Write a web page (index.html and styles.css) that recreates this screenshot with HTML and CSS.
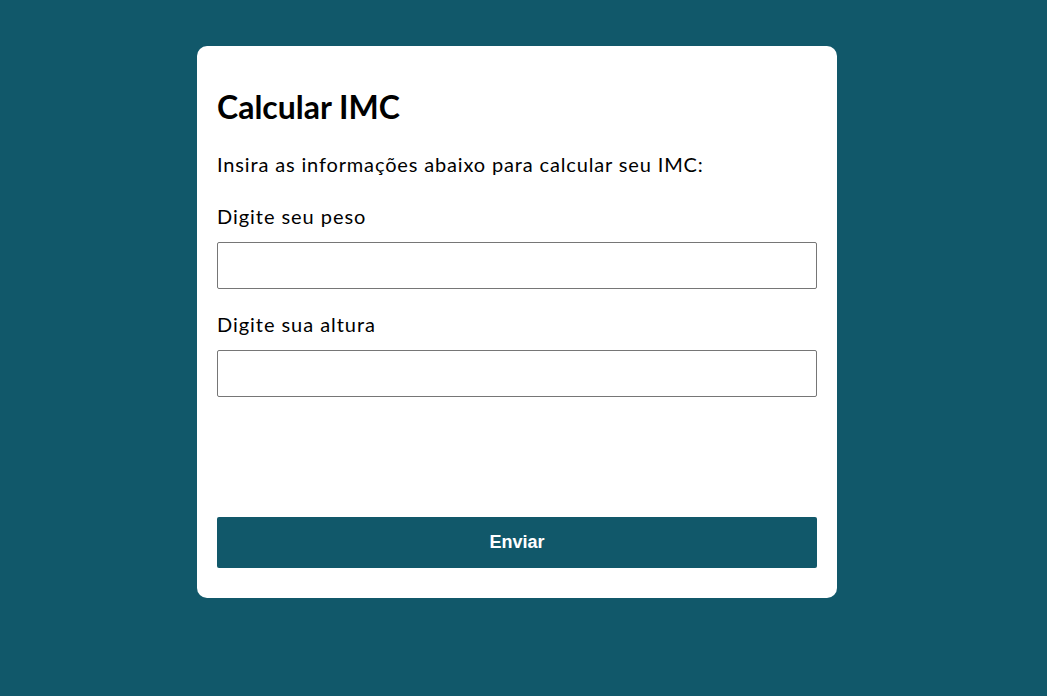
FILE: index.html
```html
<!DOCTYPE html>
<html lang="pt-BR">
<head>
<meta charset="utf-8">
<title>Calcular IMC</title>
<link rel="stylesheet" href="styles.css">
</head>
<body>
<main class="card">
  <h1 class="title">Calcular IMC</h1>
  <p class="subtitle">Insira as informações abaixo para calcular seu IMC:</p>
  <label class="label label-first" for="peso">Digite seu peso</label>
  <input class="field" id="peso" type="text">
  <label class="label" for="altura">Digite sua altura</label>
  <input class="field" id="altura" type="text">
  <div class="result"></div>
  <button class="btn" type="button">Enviar</button>
</main>
</body>
</html>
```
FILE: styles.css
```css
html, body {
  margin: 0;
  padding: 0;
  background: #11586a;
  height: 100%;
}
body {
  font-family: Lato, "Open Sans", sans-serif;
  color: #000;
}
.card {
  box-sizing: border-box;
  width: 640px;
  margin: 46px 0 0 197px;
  padding: 41px 20px 30px 20px;
  background: #fff;
  border-radius: 10px;
  display: flex;
  flex-direction: column;
}
.title {
  margin: 0;
  font-size: 32px;
  line-height: 40px;
  font-weight: 700;
}
.subtitle {
  margin: 25px 0 0 0;
  font-size: 20px;
  line-height: 24px;
  letter-spacing: 0.85px;
}
.label {
  display: block;
  margin-top: 23px;
  font-size: 20px;
  line-height: 24px;
  letter-spacing: 0.95px;
}
.label-first {
  margin-top: 28px;
}
.field {
  box-sizing: border-box;
  width: 100%;
  height: 47px;
  margin: 14px 0 0 0;
  border: 1px solid #767676;
  border-radius: 2px;
  background: #fff;
  padding: 0 8px;
  font-size: 16px;
}
.result {
  height: 120px;
}
.btn {
  height: 51px;
  width: 100%;
  border: none;
  border-radius: 2px;
  background: #11586a;
  color: #fff;
  font-family: "Liberation Sans", Arial, sans-serif;
  font-weight: 700;
  font-size: 18px;
}
```
